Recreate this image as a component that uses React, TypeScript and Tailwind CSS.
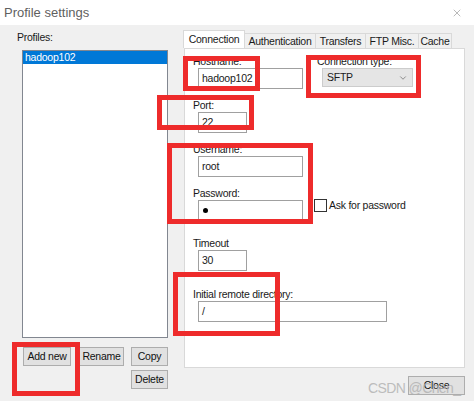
import React from 'react';
import { X, ChevronDown } from 'lucide-react';

const font = { fontFamily: '"Liberation Sans", Arial, sans-serif' };

function Field({ label, width, value, className = '' }: { label: string; width: string; value: string; className?: string }) {
  return (
    <div className={className}>
      <div className="h-[14px] leading-[14px]">{label}</div>
      <div className={`ml-[5px] h-[21px] ${width} border border-[#a0a0a0] bg-white px-[3px] leading-[19px]`}>{value}</div>
    </div>
  );
}

function Btn({ children, className = '' }: { children: React.ReactNode; className?: string }) {
  return (
    <button className={`h-[19px] border border-[#adadad] bg-[#e1e1e1] text-[#111] leading-[17px] ${className}`}>{children}</button>
  );
}

const tabs = ['Authentication', 'Transfers', 'FTP Misc.', 'Cache'];
const tabWidths = ['w-[71px]', 'w-[50px]', 'w-[53px]', 'w-[33px]'];

export default function App() {
  return (
    <div
      className="relative h-[401px] w-[474px] overflow-hidden bg-[#f0f0f0] text-[10.5px] tracking-[-0.25px] text-[#1a1a1a]"
      style={font}
    >
      {/* title bar */}
      <div className="flex h-[25px] items-center justify-between bg-white pl-[4px] pr-[11px]">
        <span className="text-[13px] tracking-normal text-[#5f5f5f]">Profile settings</span>
        <X className="h-[12px] w-[12px] text-[#8a8a8a]" strokeWidth={1.2} />
      </div>

      <div className="flex">
        {/* profiles column */}
        <div className="w-[168px] pl-[17px] pt-[5px]">
          <div className="h-[14px] leading-[14px]">Profiles:</div>
          <div className="ml-[5px] mt-[6px] h-[288px] w-[146px] border border-[#828790] bg-white">
            <div className="h-[13px] bg-[#0078d7] pl-[2px] leading-[13px] text-white">hadoop102</div>
          </div>
          <div className="ml-[6px] mt-[9px] flex items-start">
            <Btn className="w-[48px]">Add new</Btn>
            <Btn className="ml-[8px] w-[45px]">Rename</Btn>
            <div className="ml-[7px] flex flex-col gap-[4px]">
              <Btn className="w-[37px]">Copy</Btn>
              <Btn className="w-[37px]">Delete</Btn>
            </div>
          </div>
        </div>

        {/* settings column */}
        <div className="ml-[15px] flex w-[282px] flex-col pt-[6px]">
          <div className="flex h-[17px] items-end">
            <div className="relative z-10 h-[18px] w-[62px] border border-b-0 border-[#d9d9d9] bg-white text-center leading-[16px]">
              Connection
            </div>
            {tabs.map((t, i) => (
              <div
                key={t}
                className={`h-[15px] ${tabWidths[i]} border border-l-0 border-b-0 border-[#d9d9d9] bg-[#f0f0f0] text-center leading-[14px]`}
              >
                {t}
              </div>
            ))}
          </div>
          <div className="ml-[1px] h-[320px] w-[281px] border border-[#d9d9d9] bg-white pl-[8px] pt-[5px]">
            <div className="flex">
              <Field label="Hostname:" width="w-[105px]" value="hadoop102" className="w-[124px]" />
              <div>
                <div className="h-[14px] leading-[14px]">Connection type:</div>
                <div className="ml-[5px] flex h-[19px] w-[91px] items-center justify-between border border-[#cccccc] bg-[#e5e5e5] pl-[4px] pr-[4px]">
                  <span>SFTP</span>
                  <ChevronDown className="h-[10px] w-[10px] text-[#555]" strokeWidth={1.5} />
                </div>
              </div>
            </div>
            <Field label="Port:" width="w-[49px]" value="22" className="mt-[9px]" />
            <Field label="Username:" width="w-[105px]" value="root" className="mt-[9px]" />
            <div className="mt-[9px]">
              <div className="h-[14px] leading-[14px]">Password:</div>
              <div className="flex items-start">
                <div className="ml-[5px] flex h-[21px] w-[105px] items-center border border-[#a0a0a0] bg-white px-[4px]">
                  <span className="h-[5px] w-[5px] rounded-full bg-black" />
                </div>
                <div className="ml-[11px] mt-[-1px] h-[13px] w-[13px] border border-[#333] bg-white" />
                <span className="ml-[2px] mt-[-2px] leading-[14px]">Ask for password</span>
              </div>
            </div>
            <Field label="Timeout" width="w-[49px]" value="30" className="mt-[15px]" />
            <Field label="Initial remote directory:" width="w-[189px]" value="/" className="mt-[16px]" />
          </div>
          <div className="mt-[8px] flex justify-end">
            <Btn className="relative h-[18px] w-[57px]">Close</Btn>
          </div>
        </div>
      </div>

      {/* watermark */}
      <span className="absolute left-[368px] top-[378px] text-[14px] tracking-[-0.6px] text-[#b0b0b0] opacity-80">
        CSDN @Chen_
      </span>

      {/* red annotation boxes */}
      <div className="absolute left-[183px] top-[56px] h-[35px] w-[77px] border-[5px] border-[#ee2b2b]" />
      <div className="absolute left-[306px] top-[55px] h-[43px] w-[115px] border-[5px] border-[#ee2b2b]" />
      <div className="absolute left-[157px] top-[95px] h-[35px] w-[97px] border-[5px] border-[#ee2b2b]" />
      <div className="absolute left-[167px] top-[143px] h-[81px] w-[146px] border-[5px] border-[#ee2b2b]" />
      <div className="absolute left-[173px] top-[272px] h-[64px] w-[107px] border-[5px] border-[#ee2b2b]" />
      <div className="absolute left-[12px] top-[342px] h-[54px] w-[68px] border-[5px] border-[#ee2b2b]" />
    </div>
  );
}
